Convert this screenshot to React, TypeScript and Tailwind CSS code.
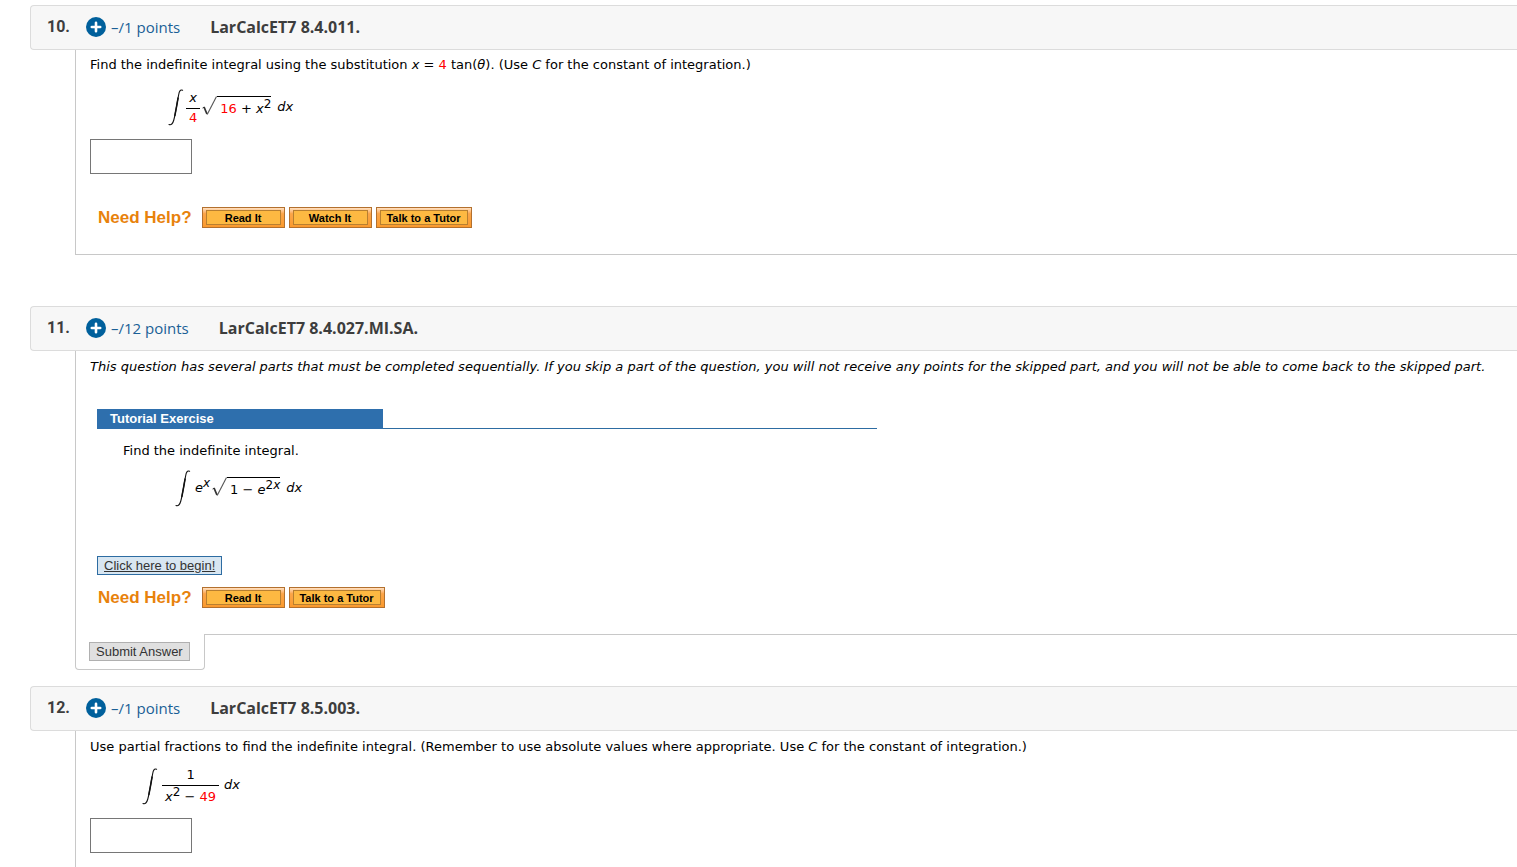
import type { ReactNode } from "react";

function PlusIcon() {
  return (
    <svg viewBox="0 0 20 20" className="size-5" aria-hidden="true">
      <circle cx="10" cy="10" r="10" fill="#00609c" />
      <path d="M10 5.800v8.400M5.800 10h8.400" stroke="#fff" strokeWidth="2.600" strokeLinecap="round" />
    </svg>
  );
}

function QuestionHeader({ number, points, title }: { number: string; points: string; title: string }) {
  return (
    <header className="flex h-[45px] items-center rounded-l-sm border border-r-0 border-[#dcdcdc] bg-[#f7f7f7] pb-0.5 pl-4 font-['Open_Sans',sans-serif] leading-5 text-[#3d3d3d]">
      <h2 className="mr-4 font-['Roboto',sans-serif] text-base leading-5 font-bold">{number}</h2>
      <a href="#points" className="mr-[30px] flex items-center gap-[5px] text-[15px] font-medium text-[#1a5f96]">
        <PlusIcon />
        <span>{points}</span>
      </a>
      <span className="text-base leading-5 font-bold">{title}</span>
    </header>
  );
}

function Integral() {
  return (
    <svg viewBox="0 0 16 37" className="h-[37px] w-4 shrink-0" aria-label="integral" role="img">
      <path
        d="M14.600 1.300C13 .5 11.900 1 11.200 3.400 9.800 9 7.800 23.500 5.800 31 4.700 35 3.200 36.200 1 35.500"
        fill="none"
        stroke="#111"
        strokeWidth="1.100"
        strokeLinecap="round"
      />
      <path d="M10.200 8.500 6.800 27" stroke="#111" strokeWidth="1.500" />
    </svg>
  );
}

function Sqrt({ children }: { children: ReactNode }) {
  return (
    <span className="flex items-start pb-0.5">
      <svg viewBox="0 0 15 20" className="h-5 w-[15px] shrink-0" aria-label="square root" role="img">
        <path d="M.6 12 2.200 11" stroke="#333" strokeWidth="1" fill="none" />
        <path d="M2 11 5 18" stroke="#333" strokeWidth="1.800" fill="none" />
        <path d="M5.200 18.600 14.500.500" stroke="#555" strokeWidth="1.100" fill="none" />
      </svg>
      <span className="border-t border-black pt-1 pl-[3px] leading-4">{children}</span>
    </span>
  );
}

function Sup({ children }: { children: ReactNode }) {
  return <sup className="-top-[5px] text-[12px]">{children}</sup>;
}

function Fraction({ top, bottom }: { top: ReactNode; bottom: ReactNode }) {
  return (
    <span className="flex flex-col text-center leading-4">
      <span className="border-b border-black px-[3px] pb-0.5">{top}</span>
      <span className="px-[3px] pt-px">{bottom}</span>
    </span>
  );
}

function Red({ children }: { children: ReactNode }) {
  return <span className="text-[#f00]">{children}</span>;
}

function AnswerBox({ label }: { label: string }) {
  return <input type="text" aria-label={label} className="block h-[35px] w-[102px] border border-[#767676] bg-white px-2" />;
}

function HelpButton({ children, wide = false }: { children: string; wide?: boolean }) {
  return (
    <button
      type="button"
      className={`${wide ? "w-24" : "w-[83px]"} h-[21px] border border-[#b3702e] bg-linear-to-b from-[#ffe0c0] via-[#fba548] via-30% to-[#fb9a2c] px-[3px] py-0.5 font-['Liberation_Sans',Arial,sans-serif] text-[11px] leading-[15px] font-bold whitespace-nowrap text-black`}
    >
      <span className="block h-[15px] border border-[#b87f30] bg-[#fdb942]">{children}</span>
    </button>
  );
}

function NeedHelp({ items }: { items: string[] }) {
  return (
    <div className="flex items-center pl-2">
      <strong className="mr-2.5 font-['Liberation_Sans',Arial,sans-serif] text-[17px] leading-5 text-[#e8820c]">Need Help?</strong>
      <div className="flex gap-1">
        {items.map((item) => (
          <HelpButton key={item} wide={item === "Talk to a Tutor"}>
            {item}
          </HelpButton>
        ))}
      </div>
    </div>
  );
}

export default function App() {
  return (
    <main className="min-h-screen overflow-hidden bg-white pt-[5px] pl-[30px] font-[Verdana,'DejaVu_Sans',sans-serif] text-[13px] leading-5 text-black">
      <section>
        <QuestionHeader number="10." points="–/1 points" title="LarCalcET7 8.4.011." />
        <div className="ml-[45px] border-b border-l border-[#c8c8c8] pt-[5px] pb-[26px] pl-3.5">
          <p>
            Find the indefinite integral using the substitution <i>x</i> = <Red>4</Red> tan(<i>θ</i>). (Use <i>C</i> for the constant of integration.)
          </p>
          <div className="mt-3.5 mb-[13px] flex items-center pl-[78px]">
            <Integral />
            <span className="ml-0.5">
              <Fraction top={<i>x</i>} bottom={<Red>4</Red>} />
            </span>
            <span className="ml-0.5">
              <Sqrt>
                <Red>16</Red> + <i>x</i>
                <Sup>2</Sup>
              </Sqrt>
            </span>
            <i className="ml-1.5 pb-0.5">dx</i>
          </div>
          <AnswerBox label="Answer to question 10" />
          <div className="mt-[33px]">
            <NeedHelp items={["Read It", "Watch It", "Talk to a Tutor"]} />
          </div>
        </div>
      </section>

      <section className="mt-[51px]">
        <QuestionHeader number="11." points="–/12 points" title="LarCalcET7 8.4.027.MI.SA." />
        <div className="ml-[45px] border-l border-[#c8c8c8] pt-1.5 pb-[26px] pl-3.5">
          <p className="whitespace-nowrap italic">
            This question has several parts that must be completed sequentially. If you skip a part of the question, you will not receive any points for the skipped part, and you will not be able to come back to the skipped part.
          </p>
          <div className="mt-8 ml-[7px] max-w-[780px] border-b border-[#2d6ca2]">
            <h3 className="-mb-px w-[286px] bg-[#2e6fad] pl-[13px] font-['Liberation_Sans',Arial,sans-serif] leading-5 font-bold text-white">
              Tutorial Exercise
            </h3>
          </div>
          <p className="mt-3 ml-[33px]">Find the indefinite integral.</p>
          <div className="mt-[9px] flex items-center pl-[85px]">
            <Integral />
            <span className="ml-1 pb-0.5">
              <i>e</i>
              <Sup>
                <i>x</i>
              </Sup>
            </span>
            <span className="ml-0.5">
              <Sqrt>
                1 − <i>e</i>
                <Sup>
                  2<i>x</i>
                </Sup>
              </Sqrt>
            </span>
            <i className="ml-1.5 pb-0.5">dx</i>
          </div>
          <button
            type="button"
            className="mt-[49px] mb-3 ml-[7px] block h-[19px] border border-[#2d6ca2] bg-[#d8e6f1] px-1.5 font-['Liberation_Sans',Arial,sans-serif] leading-4 text-[#333] underline"
          >
            Click here to begin!
          </button>
          <NeedHelp items={["Read It", "Talk to a Tutor"]} />
        </div>
        <div className="ml-[45px] flex">
          <div className="h-9 w-[130px] rounded-b-sm border border-t-0 border-[#c8c8c8] pt-2 pl-[13px]">
            <button
              type="button"
              className="block h-[19px] border border-[#b0b0b0] bg-[#e0e0e0] px-1.5 font-['Liberation_Sans',Arial,sans-serif] leading-4 whitespace-nowrap text-[#333]"
            >
              Submit Answer
            </button>
          </div>
          <div className="grow border-t border-[#c8c8c8]" />
        </div>
      </section>

      <section className="mt-4">
        <QuestionHeader number="12." points="–/1 points" title="LarCalcET7 8.5.003." />
        <div className="ml-[45px] border-l border-[#c8c8c8] pt-1.5 pb-6 pl-3.5">
          <p>
            Use partial fractions to find the indefinite integral. (Remember to use absolute values where appropriate. Use <i>C</i> for the constant of integration.)
          </p>
          <div className="mt-2.5 mb-[13px] flex items-center pl-[52px]">
            <Integral />
            <span className="ml-1">
              <Fraction
                top="1"
                bottom={
                  <span className="block pt-0.5">
                    <i>x</i>
                    <Sup>2</Sup> − <Red>49</Red>
                  </span>
                }
              />
            </span>
            <i className="ml-[5px] pb-0.5">dx</i>
          </div>
          <AnswerBox label="Answer to question 12" />
        </div>
      </section>
    </main>
  );
}
